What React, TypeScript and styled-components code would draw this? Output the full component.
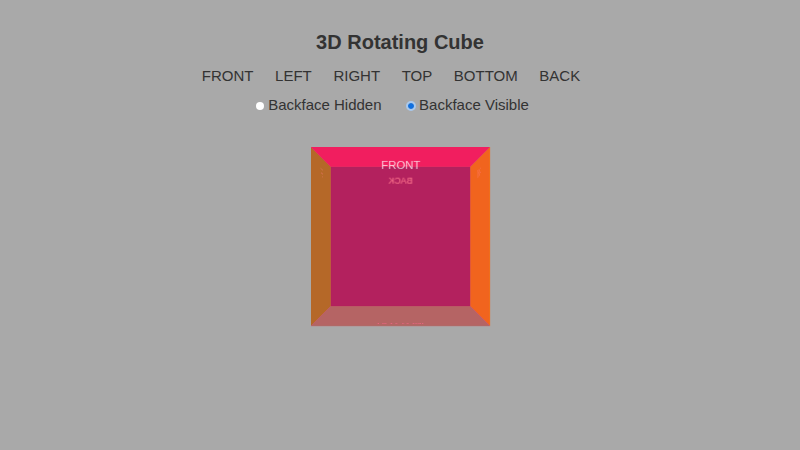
import styled, { createGlobalStyle } from 'styled-components';

const GlobalStyle = createGlobalStyle`
  html, body {
    margin: 0;
    padding: 0;
    height: 100%;
    background: #a9a9a9;
  }
  body {
    color: #333;
    font-family: "Liberation Sans", Arial, sans-serif;
  }
`;

const Page = styled.div`
  display: flex;
  flex-direction: column;
  align-items: center;
  height: 450px;
  overflow: hidden;
`;

const Title = styled.h1`
  margin: 30px 0 0;
  font-size: 20px;
  line-height: 24px;
  font-weight: 700;
`;

const Nav = styled.nav`
  display: flex;
  gap: 21.6px;
  margin: 12px 18px 0 0;
`;

const NavItem = styled.span`
  font-size: 15px;
  line-height: 20px;
`;

const Options = styled.form`
  display: flex;
  gap: 25.5px;
  margin: 9px 15px 0 0;
`;

const Option = styled.label`
  display: flex;
  align-items: center;
  gap: 4px;
  font-size: 15px;
  line-height: 20px;
`;

const Radio = styled.input`
  appearance: none;
  box-sizing: border-box;
  width: 8px;
  height: 8px;
  margin: 1px 0 0;
  border-radius: 50%;
  background: #fff;

  &:checked {
    width: 10px;
    height: 10px;
    margin: 1px -1px 0;
    background: #0f6fe0;
    background-clip: padding-box;
    border: 2px solid #a8c9ee;
  }
`;

const Scene = styled.div`
  width: 157px;
  height: 157px;
  margin: 43px 0 0 1.5px;
  perspective: 634px;
`;

const Cube = styled.div`
  position: relative;
  width: 100%;
  height: 100%;
  transform-style: preserve-3d;
`;

const Face = styled.div<{ $turn: string; $bg: string; $ink: string }>`
  position: absolute;
  inset: 0;
  padding-top: 10px;
  font-size: 10px;
  line-height: 12px;
  text-align: center;
  color: ${({ $ink }) => $ink};
  background: ${({ $bg }) => $bg};
  transform: ${({ $turn }) => $turn} translateZ(78.5px);
`;

const faces = [
  { name: 'BACK', turn: 'rotateY(180deg)', bg: 'rgb(102, 66, 138)', ink: 'rgb(255, 240, 235)' },
  { name: 'LEFT', turn: 'rotateY(-90deg)', bg: 'rgb(106, 208, 30)', ink: 'rgb(170, 225, 110)' },
  { name: 'RIGHT', turn: 'rotateY(90deg)', bg: 'rgb(226, 200, 10)', ink: 'rgb(240, 220, 90)' },
  { name: 'TOP', turn: 'rotateX(90deg)', bg: 'rgb(226, 60, 140)', ink: 'rgb(240, 130, 180)' },
  { name: 'BOTTOM', turn: 'rotateX(-90deg)', bg: 'rgb(106, 200, 150)', ink: 'rgb(225, 205, 215)' },
  { name: 'FRONT', turn: 'rotateY(0deg)', bg: 'rgba(255, 0, 50, 0.5)', ink: 'rgba(255, 255, 255, 0.75)' },
];

export default function App() {
  return (
    <Page>
      <GlobalStyle />
      <Title>3D Rotating Cube</Title>
      <Nav>
        {['FRONT', 'LEFT', 'RIGHT', 'TOP', 'BOTTOM', 'BACK'].map((label) => (
          <NavItem key={label}>{label}</NavItem>
        ))}
      </Nav>
      <Options>
        <Option>
          <Radio type="radio" name="backface" value="hidden" />
          Backface Hidden
        </Option>
        <Option>
          <Radio type="radio" name="backface" value="visible" defaultChecked />
          Backface Visible
        </Option>
      </Options>
      <Scene>
        <Cube>
          {faces.map((face) => (
            <Face key={face.name} $turn={face.turn} $bg={face.bg} $ink={face.ink}>
              {face.name}
            </Face>
          ))}
        </Cube>
      </Scene>
    </Page>
  );
}
